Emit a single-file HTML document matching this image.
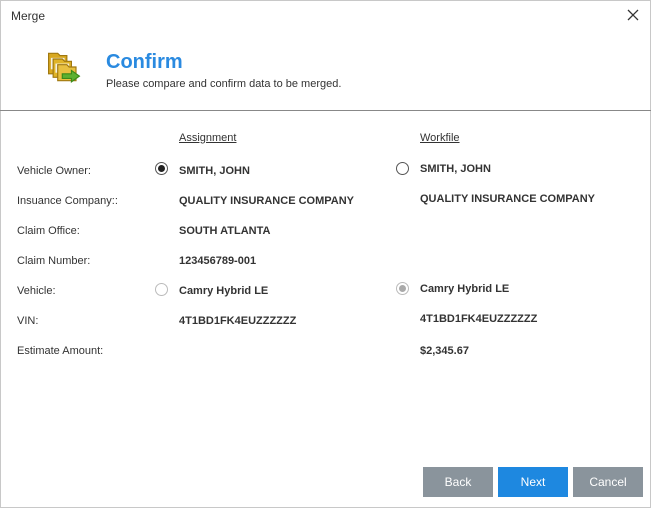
<!DOCTYPE html>
<html><head><meta charset="utf-8"><style>
*{margin:0;padding:0;box-sizing:border-box}
body{width:651px;height:508px;background:#fff;font-family:"Liberation Sans",sans-serif;color:#333;position:relative;overflow:hidden}
.win{position:absolute;left:0;top:0;width:651px;height:508px;border:1px solid #c8c8c8}
.a{position:absolute;white-space:nowrap}
.l{font-size:11px;color:#333;left:17px}
.v{font-size:11px;font-weight:bold;color:#333}
.r{position:absolute;width:13px;height:13px;border-radius:50%;border:1px solid #555;background:#fff}
.r.light{border-color:#bbb}
.btn{position:absolute;top:467px;width:70px;height:30px;color:#fff;font-size:12px;text-align:center;line-height:30px;background:#8a949c}
</style></head><body>
<div class="win"></div>
<div class="a" style="left:11px;top:9px;font-size:12px;color:#333">Merge</div>
<svg class="a" style="left:626px;top:8px" width="14" height="14"><path d="M2 2L12 12M12 2L2 12" stroke="#333" stroke-width="1.3"/></svg>
<svg class="a" style="left:46px;top:51px" width="36" height="32" viewBox="0 0 31 28">
<path d="M2 2h8l2 2h6v16H2z" fill="#d8a820" stroke="#a07810" stroke-width="1"/>
<rect x="4" y="6" width="12" height="10" fill="#f4f0e0"/>
<path d="M6 7h8l2 2h6v14H6z" fill="#e0b428" stroke="#a07810"/>
<rect x="8" y="11" width="12" height="8" fill="#f4f0e0"/>
<path d="M10 12h8l2 2h6v12H10z" fill="#e8c040" stroke="#a07810"/>
<path d="M14 20h8v-3l7 5-7 5v-3h-8z" fill="#5cb030" stroke="#3a8a18"/>
</svg>
<div class="a" style="left:106px;top:51px;font-size:20px;font-weight:bold;color:#2a8ae0">Confirm</div>
<div class="a" style="left:106px;top:78px;font-size:11px;color:#333">Please compare and confirm data to be merged.</div>
<div class="a" style="left:0;top:110px;width:651px;height:1px;background:#888"></div>
<div class="a" style="left:179px;top:132px;font-size:11px;text-decoration:underline">Assignment</div>
<div class="a" style="left:420px;top:132px;font-size:11px;text-decoration:underline">Workfile</div>
<div class="a l" style="top:165px">Vehicle Owner:</div>
<div class="a l" style="top:195px">Insuance Company::</div>
<div class="a l" style="top:225px">Claim Office:</div>
<div class="a l" style="top:255px">Claim Number:</div>
<div class="a l" style="top:285px">Vehicle:</div>
<div class="a l" style="top:315px">VIN:</div>
<div class="a l" style="top:345px">Estimate Amount:</div>
<div class="a v" style="left:179px;top:165px">SMITH, JOHN</div>
<div class="a v" style="left:179px;top:195px">QUALITY INSURANCE COMPANY</div>
<div class="a v" style="left:179px;top:225px">SOUTH ATLANTA</div>
<div class="a v" style="left:179px;top:255px">123456789-001</div>
<div class="a v" style="left:179px;top:285px">Camry Hybrid LE</div>
<div class="a v" style="left:179px;top:315px">4T1BD1FK4EUZZZZZZ</div>
<div class="a v" style="left:420px;top:163px">SMITH, JOHN</div>
<div class="a v" style="left:420px;top:193px">QUALITY INSURANCE COMPANY</div>
<div class="a v" style="left:420px;top:283px">Camry Hybrid LE</div>
<div class="a v" style="left:420px;top:313px">4T1BD1FK4EUZZZZZZ</div>
<div class="a v" style="left:420px;top:345px">$2,345.67</div>
<div class="r" style="left:155px;top:162px"><div style="position:absolute;left:2px;top:2px;width:7px;height:7px;border-radius:50%;background:#222"></div></div>
<div class="r" style="left:396px;top:162px"></div>
<div class="r light" style="left:155px;top:283px"></div>
<div class="r light" style="left:396px;top:282px"><div style="position:absolute;left:2px;top:2px;width:7px;height:7px;border-radius:50%;background:#aaa"></div></div>
<div class="btn" style="left:423px">Back</div>
<div class="btn" style="left:498px;background:#1e88e0">Next</div>
<div class="btn" style="left:573px">Cancel</div>
</body></html>
